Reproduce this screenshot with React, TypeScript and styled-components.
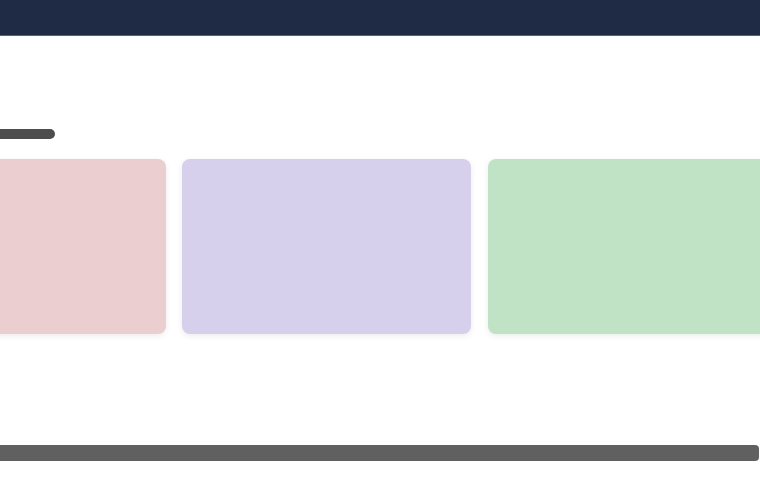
import styled, { createGlobalStyle } from "styled-components";

const GlobalStyle = createGlobalStyle`
  html, body {
    margin: 0;
    padding: 0;
    background: #ffffff;
    font-family: "Liberation Sans", Arial, sans-serif;
    overflow: hidden;
  }
`;

const Page = styled.div`
  width: 760px;
  height: 500px;
  display: flex;
  flex-direction: column;
  overflow: hidden;
`;

const TopBar = styled.header`
  height: 35px;
  flex-shrink: 0;
  background: #1f2a44;
  border-bottom: 1px solid #5a6279;
`;

const Content = styled.main`
  display: flex;
  flex-direction: column;
  padding-top: 93px;
`;

const TitleSkeleton = styled.div`
  width: 80px;
  height: 10px;
  margin-left: -25px;
  border-radius: 5px;
  background: #4d4d4d;
`;

const CardRow = styled.div`
  display: flex;
  gap: 16.5px;
  margin-top: 20px;
  margin-left: -123.5px;
`;

const Card = styled.div<{ $bg: string }>`
  flex-shrink: 0;
  width: 289px;
  height: 175px;
  border-radius: 8px;
  background: ${(p) => p.$bg};
  box-shadow: 0 2px 6px rgba(0, 0, 0, 0.08);
`;

const ScrollTrack = styled.div`
  margin-top: 111px;
  width: 760px;
  height: 16px;
`;

const ScrollThumb = styled.div`
  width: 759px;
  height: 16px;
  border-radius: 0 4px 4px 0;
  background: #606060;
`;

const cards = ["#ebcfd0", "#d7d0ed", "#bfe3c4"];

export default function App() {
  return (
    <>
      <GlobalStyle />
      <Page>
        <TopBar />
        <Content>
          <TitleSkeleton />
          <CardRow>
            {cards.map((c) => (
              <Card key={c} $bg={c} />
            ))}
          </CardRow>
          <ScrollTrack>
            <ScrollThumb />
          </ScrollTrack>
        </Content>
      </Page>
    </>
  );
}
